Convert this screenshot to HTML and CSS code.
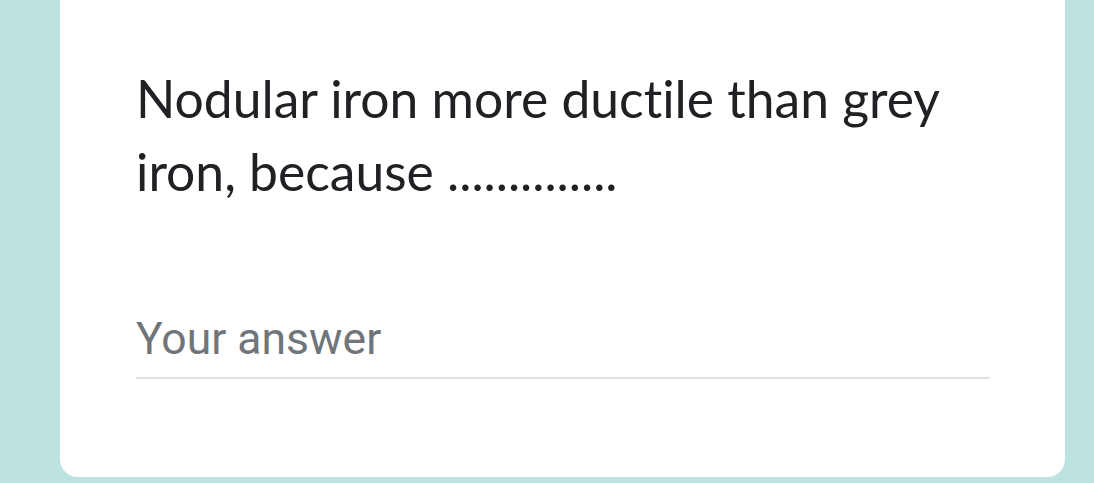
FILE: index.html
```html
<!DOCTYPE html>
<html lang="en">
<head>
<meta charset="utf-8">
<link rel="stylesheet" href="styles.css">
</head>
<body>
<div class="card">
  <div class="question">Nodular iron more ductile than grey iron, because ..............</div>
  <div class="answer">
    <span class="placeholder">Your answer</span>
  </div>
</div>
</body>
</html>
```

FILE: styles.css
```css
html, body {
  margin: 0;
  padding: 0;
}
body {
  background: #bde3e0;
  width: 1094px;
  height: 483px;
  overflow: hidden;
}
.card {
  margin-left: 60px;
  width: 1005px;
  height: 477px;
  box-sizing: border-box;
  background: #ffffff;
  border-radius: 0 0 18px 18px;
  padding: 62px 75px 0 76px;
}
.question {
  font-family: Lato, "Open Sans", sans-serif;
  font-size: 51.6px;
  line-height: 73px;
  color: #202124;
  width: 840px;
  font-variant-ligatures: none;
}
.answer {
  margin-top: 105px;
  width: 854px;
  border-bottom: 2px solid #e2e2e2;
  padding-bottom: 12px;
}
.placeholder {
  font-family: Roboto, sans-serif;
  font-size: 44.5px;
  line-height: 52px;
  color: #70757a;
}
```
